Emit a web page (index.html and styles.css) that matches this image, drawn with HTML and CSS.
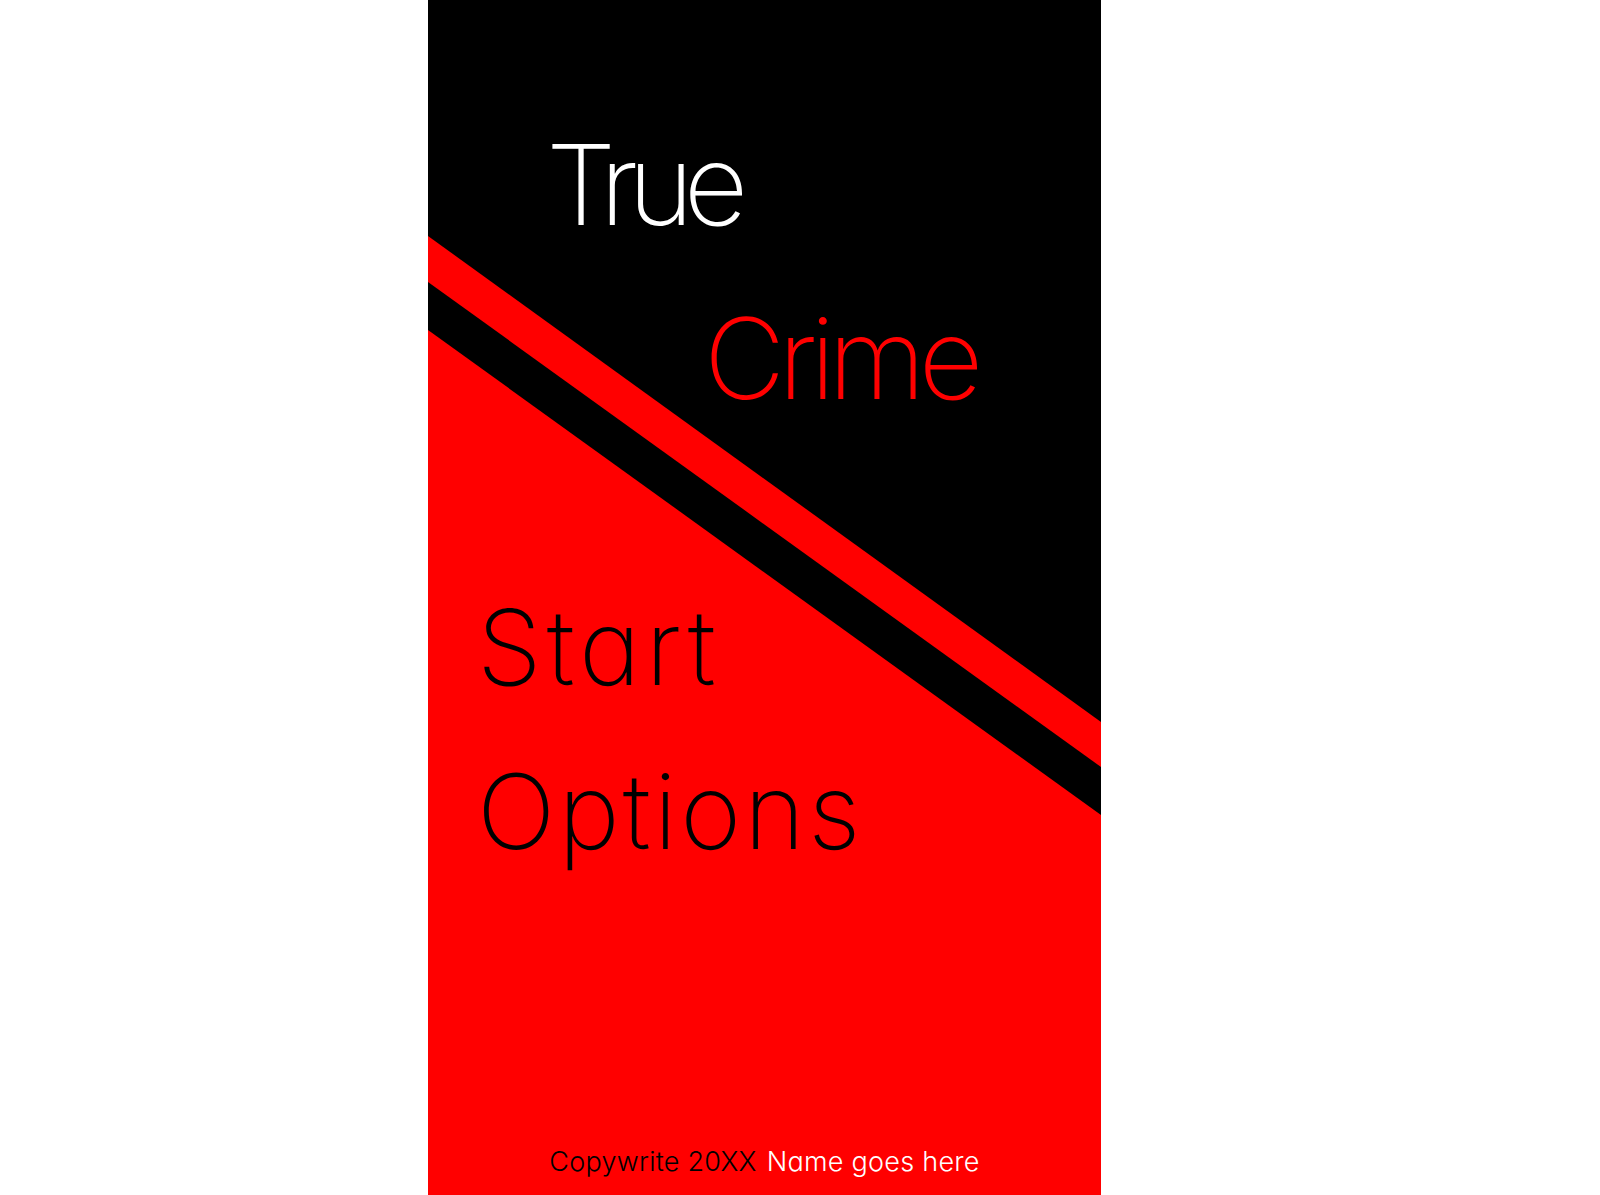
FILE: index.html
```html
<!DOCTYPE html>
<html lang="en">
<head>
<meta charset="utf-8">
<title>True Crime</title>
<link rel="stylesheet" href="styles.css">
</head>
<body>
<main class="poster">
  <svg class="stripes" viewBox="0 0 673 1195" preserveAspectRatio="none" aria-hidden="true">
    <rect x="0" y="0" width="673" height="1195" fill="#000"/>
    <polygon points="0,236 673,722 673,1195 0,1195" fill="#ff0000"/>
    <polygon points="0,282 673,767 673,815 0,330" fill="#000"/>
  </svg>
  <header class="title">
    <h1 class="title-line title-true">True</h1>
    <h1 class="title-line title-crime">Crime</h1>
  </header>
  <nav class="menu">
    <a class="menu-item menu-start" href="#">Start</a>
    <a class="menu-item menu-options" href="#">Options</a>
  </nav>
  <footer class="credit">
    <span class="credit-year">Copywrite 20XX</span>
    <span class="credit-name">Name goes here</span>
  </footer>
</main>
</body>
</html>
```

FILE: styles.css
```css
html, body {
  margin: 0;
  padding: 0;
  background: #fff;
}

.poster {
  position: relative;
  width: 673px;
  height: 1195px;
  margin-left: 428px;
  overflow: hidden;
  display: flex;
  flex-direction: column;
  font-family: "Inter", "Liberation Sans", sans-serif;
  font-weight: 200;
  font-feature-settings: "cv11" 1;
}

.stripes {
  position: absolute;
  inset: 0;
  width: 100%;
  height: 100%;
  z-index: 0;
}

.title, .menu, .credit {
  position: relative;
  z-index: 1;
}

.title {
  display: flex;
  flex-direction: column;
  padding-top: 128px;
}

.title-line {
  margin: 0;
  font-size: 112px;
  font-weight: 220;
  line-height: 1;
}

.title-true {
  color: #fff;
  padding-left: 118px;
  letter-spacing: -10px;
}

.title-crime {
  color: #ff0000;
  padding-left: 276px;
  margin-top: 62px;
  letter-spacing: -7px;
}

.menu {
  display: flex;
  flex-direction: column;
  align-items: flex-start;
  margin-top: 181px;
  padding-left: 49px;
  gap: 60px;
}

.menu-item {
  color: #000;
  text-decoration: none;
  font-size: 104px;
  font-weight: 230;
  line-height: 1;
  letter-spacing: 3px;
}

.menu-start {
  letter-spacing: 5px;
}

.credit {
  margin-top: auto;
  padding-bottom: 20px;
  display: flex;
  justify-content: center;
  gap: 10px;
  font-size: 27px;
  font-weight: 300;
  line-height: 1;
  letter-spacing: 0.25px;
}

.credit-year {
  color: #000;
}

.credit-name {
  color: #fff;
}
```
